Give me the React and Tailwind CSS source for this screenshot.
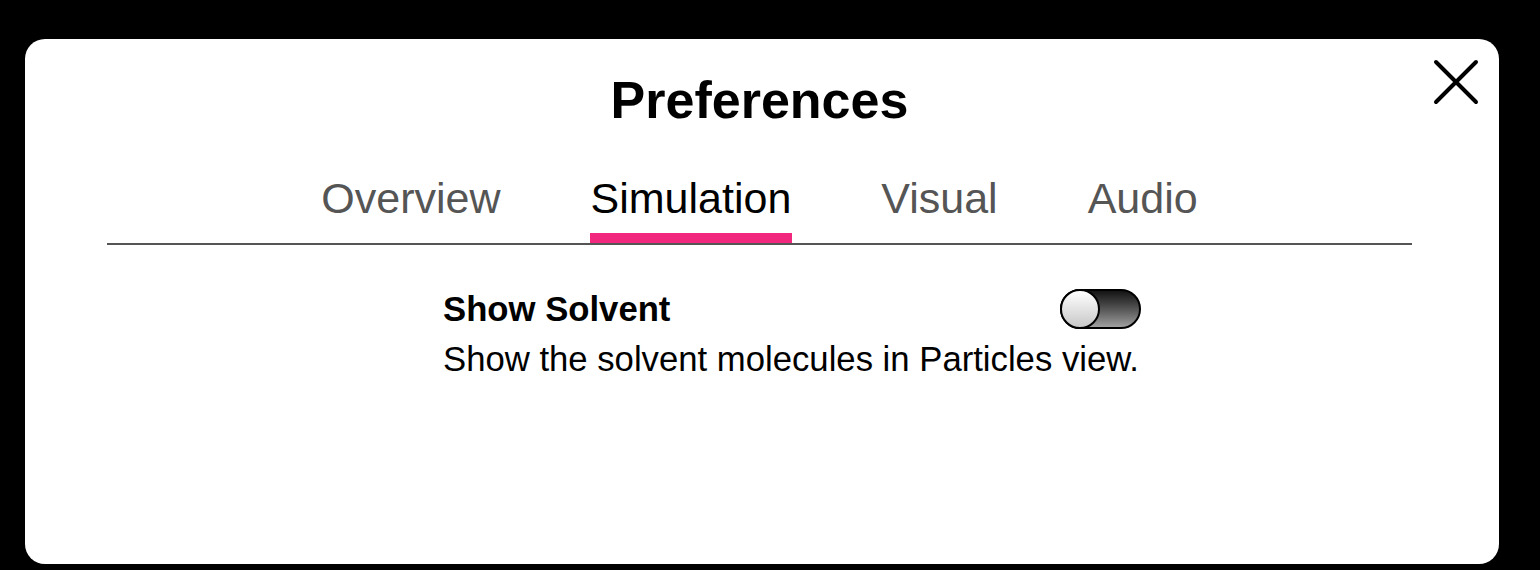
import { useState } from "react";

const TABS = ["Overview", "Simulation", "Visual", "Audio"];

const Toggle = ({ on, onChange }) => (
  <button
    onClick={() => onChange(!on)}
    className="relative w-[81px] h-[40px] rounded-full border-2 border-black bg-gradient-to-b from-[#151515] to-[#a0a0a0]"
  >
    <span
      className={`absolute top-[-2px] w-[40px] h-[40px] rounded-full border-2 border-black bg-gradient-to-b from-white to-[#c8c8c8] ${
        on ? "left-[39px]" : "left-[-2px]"
      }`}
    ></span>
  </button>
);

export default function App() {
  const [tab, setTab] = useState("Simulation");
  const [solvent, setSolvent] = useState(false);

  return (
    <div className="w-[1540px] h-[570px] bg-black overflow-hidden pt-[39px] pl-[25px] font-['Liberation_Sans',Arial,sans-serif]">
      <div className="relative w-[1474px] h-[525px] bg-white rounded-[20px]">
        {/* close */}
        <button className="absolute left-[1405px] top-[17px] w-[52px] h-[52px] flex items-center justify-center text-black">
          <svg width="46" height="46" viewBox="0 0 46 46" fill="none" stroke="currentColor" strokeWidth="4" strokeLinecap="round">
            <path d="M3 3 L43 43 M43 3 L3 43" />
          </svg>
        </button>

        <div className="ml-[82px] mr-[87px] pt-[32px] flex flex-col">
          <h1 className="text-center text-[52px] leading-[58px] font-bold text-black">Preferences</h1>

          {/* tabs */}
          <div className="mt-[45px] flex justify-center gap-[88px] border-b-2 border-[#555]">
            {TABS.map((t) => (
              <button key={t} onClick={() => setTab(t)} className="flex flex-col items-stretch">
                <span
                  className={`text-[43px] leading-[48px] px-[1px] ${
                    tab === t ? "text-black" : "text-[#555]"
                  }`}
                >
                  {t}
                </span>
                <span className={`mt-[11px] h-[10px] ${tab === t ? "bg-[#f2277e]" : "bg-transparent"}`}></span>
              </button>
            ))}
          </div>

          {/* settings */}
          <div className="mt-[44px] ml-[336px] w-[700px] flex flex-col">
            <div className="flex items-center justify-between pr-[2px]">
              <span className="text-[34.7px] leading-[40px] font-bold text-black whitespace-nowrap">Show Solvent</span>
              <Toggle on={solvent} onChange={setSolvent} />
            </div>
            <p className="mt-[10px] text-[34.7px] leading-[40px] text-black whitespace-nowrap">
              Show the solvent molecules in Particles view.
            </p>
          </div>
        </div>
      </div>
    </div>
  );
}
